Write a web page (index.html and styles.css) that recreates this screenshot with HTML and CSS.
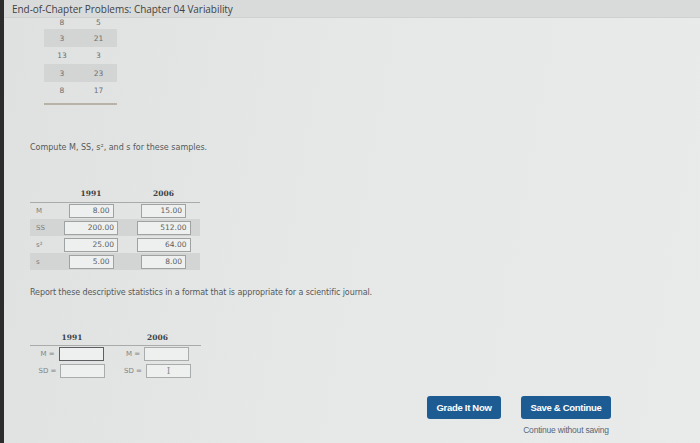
FILE: index.html
```html
<!DOCTYPE html>
<html lang="en">
<head>
<meta charset="utf-8">
<title>End-of-Chapter Problems: Chapter 04 Variability</title>
<link rel="stylesheet" href="styles.css">
</head>
<body>
<div class="page">
  <header class="titlebar">End-of-Chapter Problems: Chapter 04 Variability</header>
  <main class="content">
    <table class="data">
      <tbody>
        <tr class="r-first"><td>8</td><td>5</td></tr>
        <tr class="shade"><td>3</td><td>21</td></tr>
        <tr><td>13</td><td>3</td></tr>
        <tr class="shade"><td>3</td><td>23</td></tr>
        <tr><td>8</td><td>17</td></tr>
      </tbody>
    </table>
    <div class="data-rule"></div>

    <p class="prompt prompt-compute">Compute M, SS, s², and s for these samples.</p>

    <table class="stats">
      <thead>
        <tr><th class="lbl"></th><th>1991</th><th>2006</th></tr>
      </thead>
      <tbody>
        <tr><td class="lbl">M</td><td><span class="box narrow">8.00</span></td><td><span class="box narrow">15.00</span></td></tr>
        <tr class="shade"><td class="lbl">SS</td><td><span class="box wide">200.00</span></td><td><span class="box wide">512.00</span></td></tr>
        <tr><td class="lbl">s²</td><td><span class="box wide">25.00</span></td><td><span class="box wide">64.00</span></td></tr>
        <tr class="shade"><td class="lbl">s</td><td><span class="box narrow">5.00</span></td><td><span class="box narrow">8.00</span></td></tr>
      </tbody>
    </table>

    <p class="prompt prompt-report">Report these descriptive statistics in a format that is appropriate for a scientific journal.</p>

    <table class="report">
      <thead>
        <tr><th>1991</th><th>2006</th></tr>
      </thead>
      <tbody>
        <tr>
          <td><span class="eq">M =</span><span class="field focus"></span></td>
          <td><span class="eq">M =</span><span class="field"></span></td>
        </tr>
        <tr>
          <td><span class="eq">SD =</span><span class="field"></span></td>
          <td><span class="eq">SD =</span><span class="field"><span class="caret">I</span></span></td>
        </tr>
      </tbody>
    </table>

    <div class="actions">
      <button class="btn btn-grade" type="button">Grade It Now</button>
      <div class="save-col">
        <button class="btn btn-save" type="button">Save &amp; Continue</button>
        <a class="skip" href="#">Continue without saving</a>
      </div>
    </div>
  </main>
</div>
</body>
</html>
```

FILE: styles.css
```css
* { box-sizing: border-box; }

html, body {
  margin: 0;
  padding: 0;
  background: #e3e5e4;
}

.page {
  width: 700px;
  height: 443px;
  overflow: hidden;
  border-left: 4px solid #2c2c2c;
  background: linear-gradient(100deg, #dfe1e0 0%, #e6e8e7 45%, #e9ebea 100%);
  font-family: "DejaVu Sans", Verdana, sans-serif;
  color: #5b5e60;
}

.titlebar {
  height: 18px;
  padding-left: 8px;
  font-family: "Open Sans", "Liberation Sans", sans-serif;
  font-size: 10px;
  line-height: 18px;
  letter-spacing: -0.05px;
  color: #3f4244;
  background: #d9dbda;
  border-bottom: 1px solid #cfd1d0;
  white-space: nowrap;
}

.content {
  display: flex;
  flex-direction: column;
  align-items: flex-start;
}

/* data table */
.data {
  margin-left: 40px;
  border-collapse: collapse;
  font-size: 7.5px;
  color: #6c6f71;
}
.data td {
  width: 36px;
  height: 17px;
  padding: 0;
  text-align: center;
  vertical-align: middle;
}
.data td + td { width: 37px; }
.data .r-first td { height: 11px; line-height: 9px; vertical-align: top; }
.data .shade td { background: #d3d5d4; height: 18px; }

.data-rule {
  margin-left: 40px;
  margin-top: 4px;
  width: 73px;
  height: 2px;
  background: #b7b3a6;
}

.prompt {
  margin: 0;
  font-size: 8px;
  line-height: 12px;
  color: #55595b;
  white-space: nowrap;
  margin-left: 26px;
}
.prompt-compute { margin-top: 37px; }
.prompt-report { margin-top: 17px; letter-spacing: -0.1px; }

/* stats table */
.stats {
  margin-left: 26px;
  margin-top: 32px;
  border-collapse: collapse;
  font-size: 7.5px;
}
.stats th {
  height: 16px;
  padding: 0;
  font-family: "DejaVu Serif", "Liberation Serif", serif;
  font-weight: bold;
  font-size: 7.5px;
  color: #3f4244;
  text-align: center;
  vertical-align: middle;
  border-bottom: 1px solid #a9abaa;
}
.stats th, .stats td { width: 72px; }
.stats .lbl { width: 25px; }
.stats th:last-child, .stats td:last-child { width: 73px; }
.stats td {
  height: 17px;
  padding: 0;
  text-align: center;
  vertical-align: middle;
}
.stats td.lbl {
  text-align: left;
  padding-left: 6px;
  color: #7b7e80;
  font-size: 7px;
}
.stats .shade td { background: #d3d5d4; }

.box {
  display: inline-block;
  height: 14px;
  line-height: 12px;
  padding-right: 3px;
  text-align: right;
  border: 1px solid #9fa2a2;
  background: #eef0ef;
  color: #5c5f61;
  vertical-align: middle;
}
.box.narrow { width: 45px; }
.box.wide { width: 54px; }

/* report table */
.report {
  margin-left: 26px;
  margin-top: 31px;
  border-collapse: collapse;
  font-size: 7px;
}
.report th {
  height: 15px;
  padding: 0;
  font-family: "DejaVu Serif", "Liberation Serif", serif;
  font-weight: bold;
  font-size: 7.5px;
  color: #3f4244;
  text-align: center;
  vertical-align: middle;
  border-bottom: 1px solid #a9abaa;
}
.report th:first-child, .report td:first-child { width: 84px; }
.report th:last-child, .report td:last-child { width: 87px; }
.report td {
  height: 17px;
  padding: 0;
  text-align: center;
  vertical-align: middle;
  white-space: nowrap;
}
.eq {
  color: #808385;
  margin-right: 4px;
  vertical-align: middle;
}
.field {
  display: inline-block;
  width: 45px;
  height: 14px;
  border: 1px solid #a9acac;
  background: #eef0ef;
  vertical-align: middle;
  text-align: center;
  line-height: 12px;
}
.field.focus { border-color: #5d6062; }
.caret {
  font-family: "DejaVu Serif", serif;
  font-size: 9px;
  color: #8a8d8f;
}

/* actions */
.actions {
  align-self: stretch;
  display: flex;
  justify-content: flex-end;
  align-items: flex-start;
  gap: 20px;
  margin-top: 17px;
  padding-right: 89px;
}
.btn {
  height: 23px;
  margin: 0;
  padding: 0;
  border: none;
  border-radius: 3px;
  background: #1c5c93;
  color: #ffffff;
  font-family: "Liberation Sans", Arial, sans-serif;
  font-weight: bold;
  font-size: 9.5px;
  letter-spacing: -0.3px;
}
.btn-grade { width: 74px; }
.btn-save { width: 90px; }
.save-col {
  display: flex;
  flex-direction: column;
  align-items: center;
}
.skip {
  margin-top: 6px;
  font-family: "Liberation Sans", Arial, sans-serif;
  font-size: 8.5px;
  line-height: 10px;
  letter-spacing: -0.2px;
  color: #55677a;
  text-decoration: none;
  white-space: nowrap;
}
```
